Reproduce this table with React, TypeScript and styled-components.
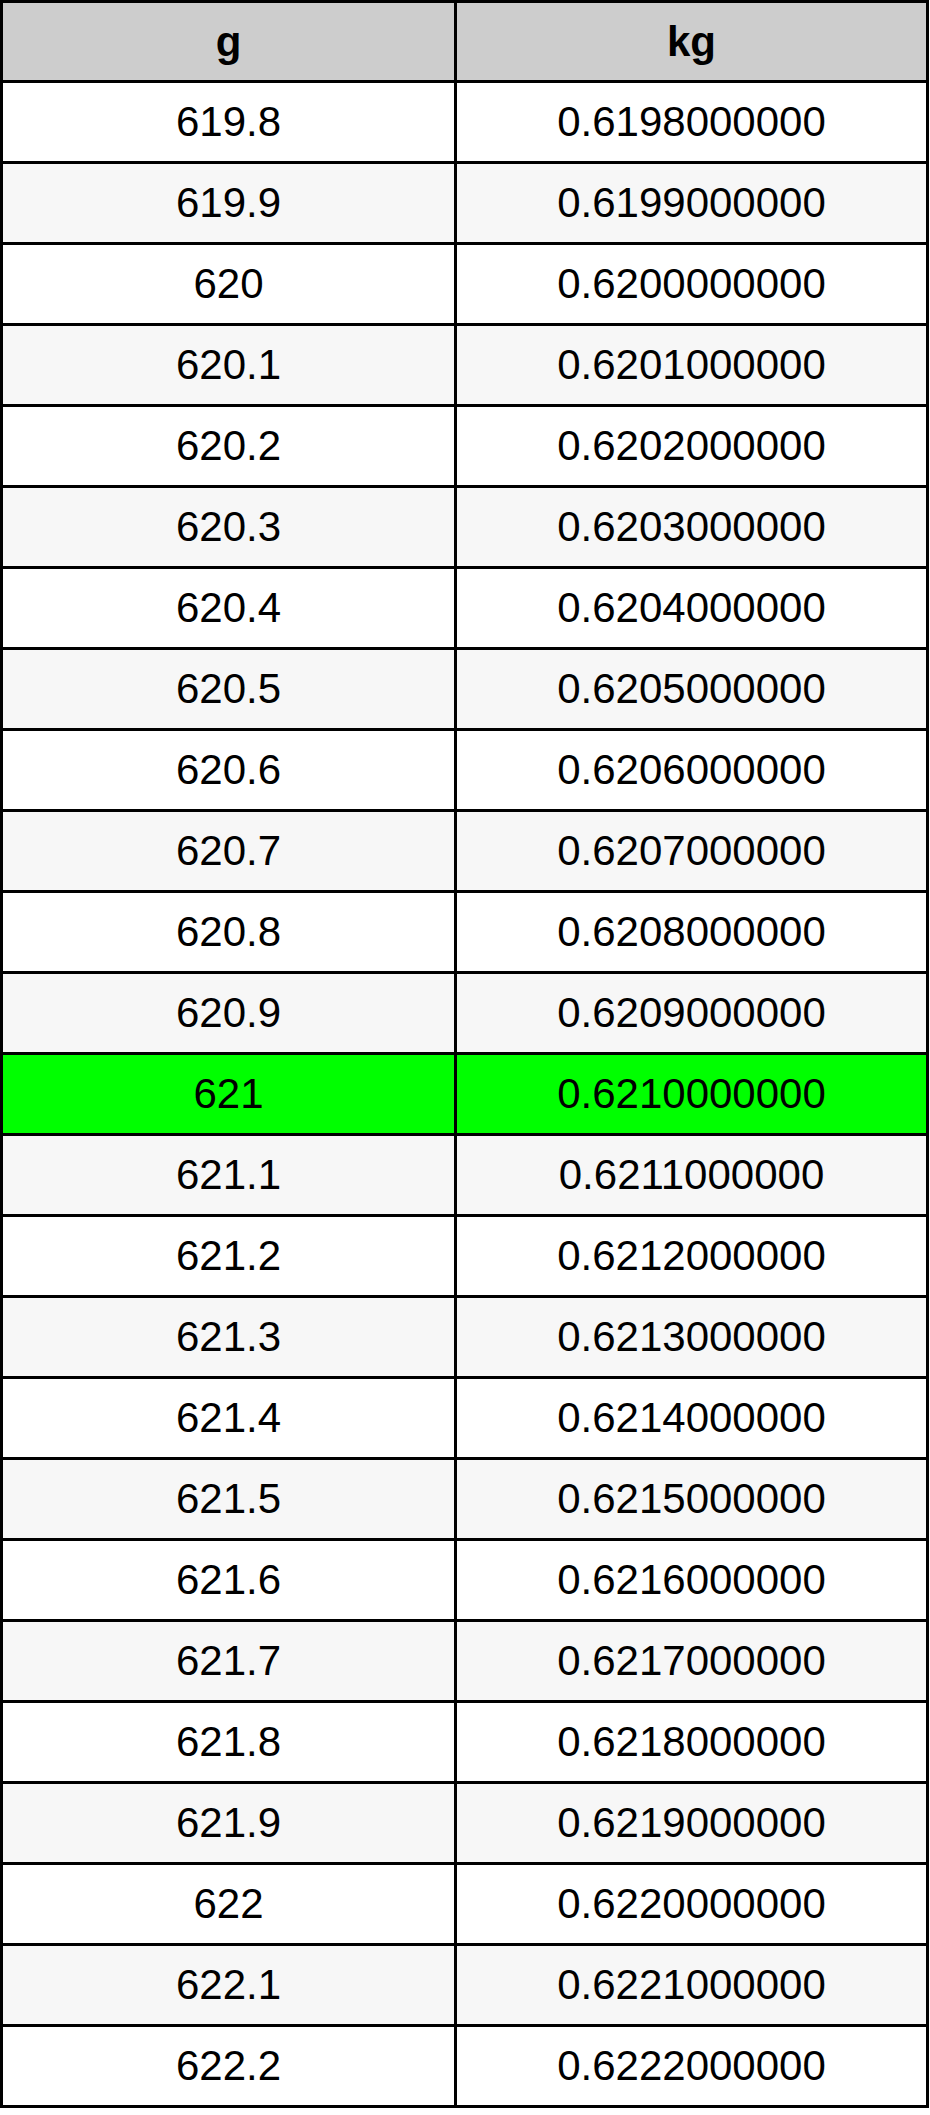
import React from "react";
import styled, { createGlobalStyle } from "styled-components";

const Global = createGlobalStyle`
  html, body { margin: 0; padding: 0; background: #ffffff; }
  body { font-family: "Liberation Sans", Arial, sans-serif; }
`;

const Table = styled.div`
  display: grid;
  grid-template-columns: 454px 472px;
  width: 929px;
  border-top: 3px solid #000;
  border-left: 3px solid #000;
  box-sizing: border-box;
  font-family: "Liberation Sans", Arial, sans-serif;
  color: #000;
`;

const Cell = styled.div<{ $bg: string; $head?: boolean }>`
  box-sizing: border-box;
  height: ${(p) => (p.$head ? 80 : 81)}px;
  border-right: 3px solid #000;
  border-bottom: 3px solid #000;
  background: ${(p) => p.$bg};
  display: flex;
  align-items: center;
  justify-content: center;
  font-size: 42px;
  font-weight: ${(p) => (p.$head ? 700 : 400)};
  line-height: 1;
`;

const values: string[] = [];
for (let i = 0; i < 25; i++) {
  const tenths = 6198 + i;
  const g = tenths / 10;
  values.push(Number.isInteger(g) ? String(g) : g.toFixed(1));
}

export default function App() {
  return (
    <>
      <Global />
      <Table>
        <Cell $head $bg="#cdcdcd">g</Cell>
        <Cell $head $bg="#cdcdcd">kg</Cell>
        {values.map((g, i) => {
          const kg = ((6198 + i) / 10000).toFixed(10);
          const bg = g === "621" ? "#00ff00" : i % 2 === 1 ? "#f7f7f7" : "#ffffff";
          return (
            <React.Fragment key={g}>
              <Cell $bg={bg}>{g}</Cell>
              <Cell $bg={bg}>{kg}</Cell>
            </React.Fragment>
          );
        })}
      </Table>
    </>
  );
}
